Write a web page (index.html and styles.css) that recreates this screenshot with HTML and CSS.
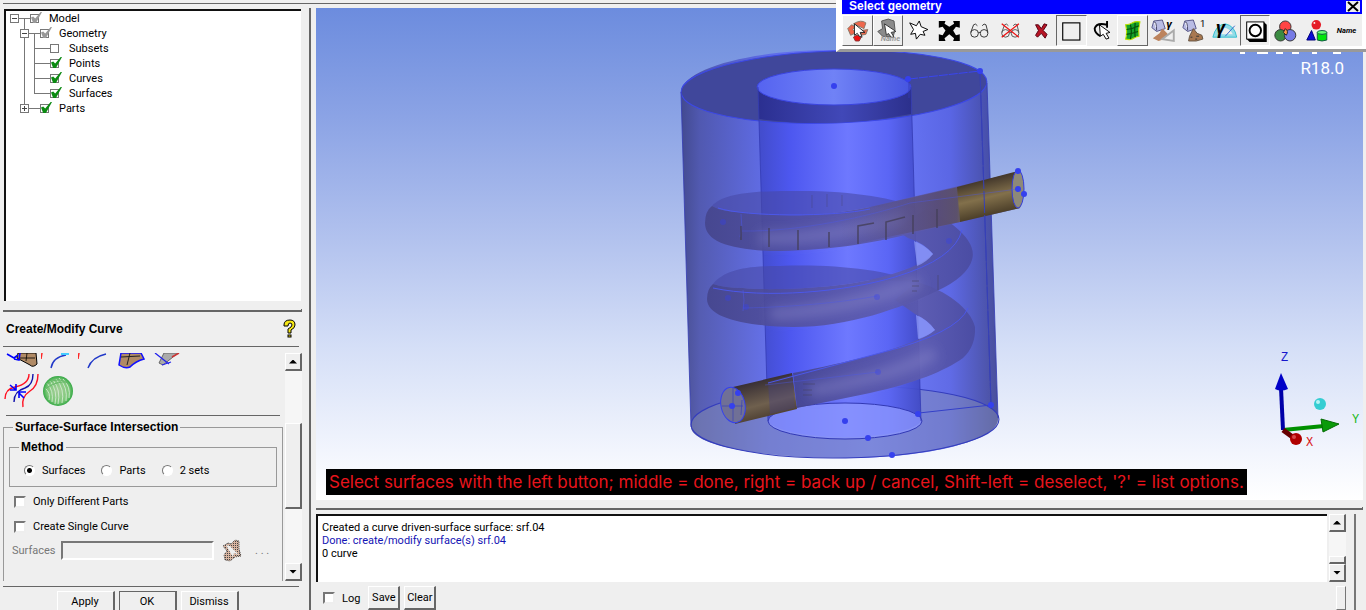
FILE: index.html
```html
<!DOCTYPE html>
<html lang="en">
<head>
    <meta charset="UTF-8">
    <meta name="viewport" content="width=device-width, initial-scale=1.0">
    <title>Create/Modify Curve</title>
    <link rel="stylesheet" href="styles.css">
</head>
<body>
    <div class="app">
        <aside class="sidebar">
            <nav class="tree">
                <ul class="root">
                    <li>
                        <div class="node"><button class="expander minus" aria-label="Collapse Model"></button><span class="branch"></span><label><input type="checkbox" class="tick partial" checked>Model</label></div>
                        <ul>
                            <li>
                                <div class="node"><button class="expander minus" aria-label="Collapse Geometry"></button><span class="branch"></span><label><input type="checkbox" class="tick partial" checked>Geometry</label></div>
                                <ul>
                                    <li class="node leaf"><span class="branch"></span><label><input type="checkbox" class="tick">Subsets</label></li>
                                    <li class="node leaf"><span class="branch"></span><label><input type="checkbox" class="tick" checked>Points</label></li>
                                    <li class="node leaf"><span class="branch"></span><label><input type="checkbox" class="tick" checked>Curves</label></li>
                                    <li class="node leaf"><span class="branch"></span><label><input type="checkbox" class="tick" checked>Surfaces</label></li>
                                </ul>
                            </li>
                            <li>
                                <div class="node"><button class="expander plus" aria-label="Expand Parts"></button><span class="branch"></span><label><input type="checkbox" class="tick" checked>Parts</label></div>
                            </li>
                        </ul>
                    </li>
                </ul>
            </nav>
            <div class="splitter"></div>
            <header class="panel-title">
                <h2>Create/Modify Curve</h2>
                <button class="help" aria-label="Help">
                    <svg width="14" height="20" viewBox="0 0 14 20"><path d="M1 6 Q1 1 7 1 Q12 1 12 6 Q12 9 8 11 V14 H5 V10 Q9 8 9 6 Q9 4 7 4 Q5 4 5 7 H1Z" fill="#f5e614" stroke="#000"/><rect x="5" y="16" width="3" height="2" fill="#f5e614" stroke="#000"/></svg>
                </button>
            </header>
            <div class="rule"></div>
            <div class="scroll-area">
                <div class="scroll-content">
                    <div class="icon-row clipped">
                        <button aria-label="Curve from surface"><svg width="36" height="16" viewBox="0 0 36 16"><path d="M14 0 H32 L33 11 Q29 15 26 12 L13 5Z" fill="#b08a65" stroke="#000"/><path d="M23 0 L22 8 M16 5 L31 5" stroke="#000" stroke-width=".8"/><path d="M3 1 L10 5 L14 2 M10 6 L15 7 L16 0" fill="none" stroke="#00f" stroke-width="1.6"/></svg></button>
                        <button aria-label="Extract curve"><svg width="36" height="16" viewBox="0 0 36 16"><path d="M1 0 L0 6" stroke="#f22" stroke-width="1.5"/><path d="M10 15 Q12 4 25 2" fill="none" stroke="#2038c8" stroke-width="1.4"/><path d="M20 1 H28" stroke="#4cf" stroke-width="2"/></svg></button>
                        <button aria-label="Project curve"><svg width="36" height="16" viewBox="0 0 36 16"><path d="M1 0 L0 6" stroke="#f22" stroke-width="1.5"/><path d="M10 15 Q14 4 28 1" fill="none" stroke="#2038c8" stroke-width="1.4"/></svg></button>
                        <button aria-label="Surface boundary"><svg width="36" height="16" viewBox="0 0 36 16"><path d="M6 0 H26 L29 6 Q21 8 15 14 Q10 16 4 12Z" fill="#b08a65" stroke="#1010ff" stroke-width="1.5"/><path d="M15 0 L12 12 M6 4 L25 3" fill="none" stroke="#222"/></svg></button>
                        <button aria-label="Trim curve"><svg width="36" height="16" viewBox="0 0 36 16"><path d="M12 0 H26 L11 12 L7 10Z" fill="#aaa" stroke="#666"/><path d="M3 0 L17 11 M10 12 L19 9" stroke="#2222ee" stroke-width="1.3"/><path d="M20 4 L27 0" stroke="#c33" stroke-width="1.5"/></svg></button>
                    </div>
                    <div class="icon-row">
                        <button aria-label="Concatenate curves"><svg width="36" height="36" viewBox="0 0 36 36"><g fill="none" stroke-width="1.4"><path d="M1 26 Q1 16 11 14 Q25 11 25 1" stroke="#f12"/><path d="M10 29 Q10 18 21 15 Q29 12 29 1" stroke="#11a"/><path d="M19 34 Q17 24 26 18 Q34 13 34 1" stroke="#f12"/></g><path d="M6 12 L12 17 M6 17 L12 17 L12 11 M20 25 L15 20 M15 25 V19 H22" stroke="#00f" stroke-width="1.6" fill="none"/></svg></button>
                        <button aria-label="Surface curves"><svg width="36" height="36" viewBox="0 0 36 36"><defs><radialGradient id="ball"><stop offset="0" stop-color="#a6cf9a"/><stop offset=".75" stop-color="#7cc878"/><stop offset="1" stop-color="#35a845"/></radialGradient></defs><circle cx="17" cy="18" r="15" fill="url(#ball)"/><g fill="none" stroke="#d2ead0" stroke-width=".9"><path d="M6 10 Q13 18 11 29"/><path d="M9 8 Q17 18 14 31"/><path d="M12 7 Q20 17 17 31"/><path d="M15 6 Q24 16 21 30"/><path d="M18 5 Q27 14 25 28"/><path d="M22 6 Q30 14 28 25"/><path d="M4 15 Q10 20 8 27"/></g><path d="M6 11 Q18 2 29 12 M4 16 Q15 8 26 9" fill="none" stroke="#66b868"/></svg></button>
                    </div>
                    <div class="rule"></div>
                    <fieldset class="group">
                        <legend>Surface-Surface Intersection</legend>
                        <fieldset class="method">
                            <legend>Method</legend>
                            <label><input type="radio" name="method" checked>Surfaces</label>
                            <label><input type="radio" name="method">Parts</label>
                            <label><input type="radio" name="method">2 sets</label>
                        </fieldset>
                        <label class="option"><input type="checkbox" class="box">Only Different Parts</label>
                        <label class="option"><input type="checkbox" class="box">Create Single Curve</label>
                        <div class="surfaces">
                            <label for="surfaces">Surfaces</label>
                            <input type="text" id="surfaces" disabled>
                            <button aria-label="Select surfaces" disabled>
                                <svg width="22" height="24" viewBox="0 0 22 24"><defs><pattern id="stipple" width="2" height="2" patternUnits="userSpaceOnUse"><rect width="2" height="2" fill="#d8b4a0"/><rect width="1" height="1" fill="#444"/></pattern></defs><path d="M2 7 L7 4 L10 5 L14 1 L18 2 L18 10 L20 17 L14 18 L9 22 L4 21 L3 16 L6 12Z" fill="url(#stipple)" stroke="#444" stroke-dasharray="1 1"/><path d="M5 6 L9 7 L15 13 L18 16 L13 14 L12 18 L9 13Z" fill="#efefef"/></svg>
                            </button>
                            <span class="dots">. . .</span>
                        </div>
                    </fieldset>
                </div>
                <div class="scrollbar">
                    <button class="up" aria-label="Scroll up"></button>
                    <div class="track"><div class="thumb"></div></div>
                    <button class="down" aria-label="Scroll down"></button>
                </div>
            </div>
            <div class="rule"></div>
            <footer class="actions">
                <button>Apply</button>
                <button class="default">OK</button>
                <button>Dismiss</button>
            </footer>
        </aside>

        <main class="main">
            <section class="stage">
                <svg class="scene" viewBox="316 8 1047 492" preserveAspectRatio="none">
                    <defs>
                        <linearGradient id="outer"><stop offset="0" stop-color="#3c4288"/><stop offset=".06" stop-color="#4b52ac"/><stop offset=".28" stop-color="#5c68ea"/><stop offset=".6" stop-color="#6b79ff"/><stop offset=".85" stop-color="#5560e4"/><stop offset="1" stop-color="#3c4294"/></linearGradient>
                        <linearGradient id="inner"><stop offset="0" stop-color="#3f49c8"/><stop offset=".2" stop-color="#4b55f0"/><stop offset=".55" stop-color="#6e78ff"/><stop offset=".8" stop-color="#5964f5"/><stop offset="1" stop-color="#3f48c4"/></linearGradient>
                        <linearGradient id="mouth"><stop offset="0" stop-color="#5563f0"/><stop offset=".5" stop-color="#7082f6"/><stop offset="1" stop-color="#4655e0"/></linearGradient>
                        <linearGradient id="lip"><stop offset="0" stop-color="#2b2f90"/><stop offset=".55" stop-color="#4148b8"/><stop offset="1" stop-color="#2c308c"/></linearGradient>
                        <linearGradient id="tube"><stop offset="0" stop-color="#45458c"/><stop offset=".3" stop-color="#504e9c"/><stop offset=".7" stop-color="#5c5aac"/><stop offset="1" stop-color="#4a4ba0"/></linearGradient>
                        <linearGradient id="brownIn" gradientUnits="userSpaceOnUse" x1="840" y1="0" x2="990" y2="0"><stop offset="0" stop-color="#5d5480" stop-opacity="0"/><stop offset=".65" stop-color="#584a6c"/><stop offset=".78" stop-color="#5d4f5c"/><stop offset=".8" stop-color="#6c5d49"/></linearGradient>
                        <linearGradient id="brown" gradientUnits="userSpaceOnUse" x1="985" y1="180" x2="993" y2="214"><stop offset="0" stop-color="#45392c"/><stop offset=".5" stop-color="#82704b"/><stop offset="1" stop-color="#4d402a"/></linearGradient>
                        <linearGradient id="brownLow" gradientUnits="userSpaceOnUse" x1="762" y1="380" x2="772" y2="418"><stop offset="0" stop-color="#393035"/><stop offset=".6" stop-color="#6f604e"/><stop offset="1" stop-color="#4b3d30"/></linearGradient>
                        <filter id="soft" filterUnits="userSpaceOnUse" x="690" y="170" width="300" height="260"><feGaussianBlur stdDeviation="6"/></filter>
                    </defs>
                    <!-- outer wall -->
                    <path d="M681 92 C683 68 752 50 834 50 C918 50 986 64 987 83 L998 418 C1000 440 930 458 845 458 C760 458 691 445 691 427Z" fill="url(#outer)" opacity=".92"/>
                    <ellipse cx="845" cy="422" rx="154" ry="36" transform="rotate(-1 845 422)" fill="#858db2" fill-opacity=".45" stroke="#343dbd"/>
                    <!-- inner wall -->
                    <path d="M758 87 L768 421 A77 18 0 0 0 921 421 L911 87 A77 18 0 0 0 758 87Z" fill="url(#inner)" opacity=".92"/>
                    <ellipse cx="845" cy="421" rx="77" ry="18" fill="#8d98ff" fill-opacity=".75" stroke="#3138b4"/>
                    <!-- top face -->
                    <ellipse cx="834" cy="87" rx="153" ry="36" transform="rotate(-2 834 87)" fill="#40479b" stroke="#3c48e6"/>
                    <path d="M758 87 L759 119 Q834 129 911 114 V87Z" fill="url(#lip)"/>
                    <ellipse cx="834" cy="87" rx="77" ry="18" fill="url(#mouth)" stroke="#3a44e0"/>
                    <path d="M909 79 L980 71" stroke="#3945f0" stroke-dasharray="9 1"/>
                    <path d="M909 79 V98 M980 71 L991 405 M987 83 L998 418 M681 92 L691 427 M758 87 L768 421 M911 87 L921 421" stroke="#343bb4" stroke-width=".8" fill="none"/>
                    <!-- coil, far side -->
                    <g fill="#484aa6" fill-opacity=".6">
                        <path d="M712 206 C722 195 745 191 790 191 C850 190 895 198 917 208 L870 207 C835 214 790 219 742 212 Q722 212 712 206Z"/>
                        <path d="M713 284 C725 270 745 266 780 266 C835 264 885 270 917 282 L870 280 C835 288 770 291 743 288 Q725 288 713 284Z"/>
                    </g>
                    <!-- coil, near side -->
                    <g fill="url(#tube)" fill-opacity=".9">
                        <path d="M915 314 Q928 320 935 330 Q928 336 917 340 C895 350 850 362 793 373 L797 408 L870 393 C915 383 945 371 963 358 Q976 346 975 327 C971 309 946 290 917 282 L895 300 Z"/>
                        <path d="M743 288 C770 291 835 288 870 280 Q920 268 933 254 Q924 243 908 238 L895 230 L926 209 Q943 217 953 225 Q977 244 972 260 Q967 277 937 291 C900 308 850 327 793 327 C745 326 707 318 707 299 Q707 289 713 284 Q725 288 743 288Z"/>
                        <path d="M712 206 Q722 212 742 212 C790 219 835 214 870 207 L1018 172 L1020 208 L913 233 C870 244 825 251 770 251 C730 249 705 242 705 223 Q705 211 712 206Z"/>
                    </g>
                    <!-- light openings between the turns -->
                    <g fill="#8a95f4" fill-opacity=".8">
                        <path d="M914 241 Q926 246 933 254 Q927 262 917 266Z"/>
                        <path d="M916 315 Q928 320 935 330 Q928 336 918 339Z"/>
                    </g>
                    <g filter="url(#soft)" fill="none" stroke="#8f8ccc" stroke-opacity=".45" stroke-width="12">
                        <path d="M760 238 C810 240 860 230 905 218"/>
                        <path d="M770 314 C820 313 870 300 920 282"/>
                        <path d="M810 391 C870 380 905 369 935 353"/>
                    </g>
                    <path d="M840 214 L958 187 L960 222 L840 247Z" fill="url(#brownIn)" opacity=".8"/>
                    <path d="M957 187 L1018 171 Q1027 187 1020 208 L960 222Z" fill="url(#brown)"/>
                    <path d="M733 387 L792 373 L797 409 L735 424Z" fill="url(#brownLow)"/>
                    <path d="M768 382 L792 375 L795 408 L770 414Z" fill="#474083" opacity=".4"/>
                    <ellipse cx="1018" cy="189" rx="6" ry="19" fill="#8e8978" stroke="#343ddd"/>
                    <ellipse cx="733" cy="405" rx="12" ry="18" fill="#707096" stroke="#3440ee" transform="rotate(-12 733 405)"/>
                    <path d="M722 406 H743 M733 388 V421 M742 400 L741 415" stroke="#3840b8" stroke-width=".7"/>
                    <g fill="none" stroke="#4c58ea" stroke-width="1">
                        <path d="M718 208 C745 217 835 217 870 209"/>
                        <path d="M713 288 C765 299 845 292 895 277 Q955 259 962 230"/>
                        <path d="M768 383 L880 353 Q958 333 968 308"/>
                        <path d="M741 214 Q743 226 740 237 M743 290 Q745 300 743 311" stroke-opacity=".5"/>
                        <path d="M742 231 C800 232 870 216 910 203 L1018 189" stroke-opacity=".4"/>
                        <path d="M743 308 C800 307 850 301 877 296 M765 385 L878 372" stroke-opacity=".4"/>
                    </g>
                    <g fill="none" stroke="#443f58" stroke-width="1.6" stroke-opacity=".8">
                        <path d="M741 226 V240 M769 228 V247 M798 230 V250 M829 232 V247 M858 244 V226 L874 223 M886 240 V222 L905 217 M913 234 V215 M937 228 V209"/>
                        <path d="M812 195 V208 M827 194 V207 M842 195 V206" stroke-opacity=".2"/>
                        <path d="M912 281 H919 M912 286 H919 M912 291 H917 M938 275 V290 M803 384 H815 M803 390 H812 M803 395 H812" stroke-width="1" stroke-opacity=".5"/>
                    </g>
                    <path d="M919 413 L991 405" stroke="#3440c8"/>
                    <path d="M980 71 L991 405" stroke="#3640b8" stroke-dasharray="22 2"/>
                    <g fill="#3540ee">
                        <circle cx="834" cy="86" r="3"/><circle cx="908" cy="79" r="3"/><circle cx="980" cy="71" r="3"/><circle cx="1018" cy="171" r="3"/><circle cx="1018" cy="189" r="3"/><circle cx="1024" cy="194" r="3"/><circle cx="738" cy="393" r="3"/><circle cx="732" cy="406" r="3"/><circle cx="845" cy="421" r="3"/><circle cx="868" cy="438" r="3"/><circle cx="892" cy="455" r="3"/><circle cx="991" cy="405" r="3"/><circle cx="918" cy="414" r="3"/>
                        <g opacity=".35"><circle cx="723" cy="222" r="3"/><circle cx="728" cy="298" r="3"/><circle cx="746" cy="307" r="3"/><circle cx="877" cy="297" r="3"/><circle cx="878" cy="372" r="3"/><circle cx="949" cy="241" r="3"/></g>
                    </g>
                    <!-- lower edge of the logo, showing under the toolbar -->
                    <path d="M1240 53 H1245 M1257 53 H1268 M1276 53 H1283 M1292 53 H1299 M1312 53 H1317 M1333 53 H1341" stroke="#fff" stroke-width="2"/>
                    <!-- axis triad -->
                    <path d="M1283 430 L1324 426" stroke="#009000" stroke-width="4"/>
                    <path d="M1321 419 L1339 424 L1323 432Z" fill="#0a9b0a" stroke="#056b05"/>
                    <path d="M1283 430 L1281 388" stroke="#0000a8" stroke-width="4"/>
                    <path d="M1281 373 L1288 389 Q1281 392 1275 389Z" fill="#0000c8"/>
                    <path d="M1283 430 L1294 438" stroke="#600" stroke-width="5"/>
                    <circle cx="1296" cy="439" r="6" fill="#b00000"/><circle cx="1294" cy="437" r="2" fill="#d84848"/>
                    <circle cx="1320" cy="404" r="6" fill="#35cdd2"/><circle cx="1318" cy="402" r="2" fill="#b6f4f4"/>
                    <g class="axis-text"><text x="1281" y="361" fill="#1616cc">Z</text><text x="1352" y="423" fill="#18b818">Y</text><text x="1306" y="446" fill="#d81818">X</text></g>
                </svg>
                <div class="version">R18.0</div>
                <p class="prompt">Select surfaces with the left button; middle = done, right = back up / cancel, Shift-left = deselect, '?' = list options.</p>
            </section>
            <div class="splitter"></div>
            <section class="console">
                <div class="output">
                    <div class="messages">
                        <p>Created a curve driven-surface surface: srf.04</p>
                        <p class="done">Done: create/modify surface(s) srf.04</p>
                        <p>0 curve</p>
                    </div>
                    <div class="scrollbar">
                        <button class="up" aria-label="Scroll up"></button>
                        <div class="track"><div class="thumb"></div></div>
                        <button class="down" aria-label="Scroll down"></button>
                    </div>
                </div>
                <div class="log-bar">
                    <label><input type="checkbox" class="box">Log</label>
                    <button>Save</button>
                    <button>Clear</button>
                    <span class="grip"></span>
                </div>
            </section>
        </main>
    </div>

    <section class="dialog">
        <header><h1>Select geometry</h1><button aria-label="Close"><svg width="12" height="11" viewBox="0 0 12 11"><path d="M1 1 L11 10 M11 1 L1 10" stroke="#000" stroke-width="2"/></svg></button></header>
        <div class="toolbar">
            <button class="raised" aria-label="Select all"><svg viewBox="0 0 30 30"><path d="M5 13 L9 9 L13 11 L10 14 L14 17 L8 20Z M11 8 Q19 3 24 7 L22 13 Z M19 15 L26 14 L24 19 L19 20Z" fill="#ee674c" stroke="#876" /><path d="M11 22 Q15 18 19 22 L17 26 H13Z" fill="#e11" stroke="#833"/><path d="M12 8 L23 17 L18 17 L20 22 L17 21 L15 18 L12 20Z" fill="#fff" stroke="#222"/></svg></button>
            <button class="raised" aria-label="Select by name"><svg viewBox="0 0 30 30"><path d="M8 5 L15 3 L21 5 L22 14 L20 22 L9 21 L4 16 L9 13Z" fill="#8b8b8b" stroke="#555"/><path d="M11 8 L23 16 L18 17 L21 22 L18 22 L15 18 L13 20Z" fill="#fff" stroke="#333"/><text x="7" y="26" class="icon-name" fill="#999">Name</text></svg></button>
            <button aria-label="Polygon"><svg viewBox="0 0 30 30"><path d="M6 7 L13 10 L16 5 L18 11 L25 14 L20 16 L22 20 L17 19 L13 24 L12 18 L7 19 L10 14Z" fill="#fff" stroke="#000"/></svg></button>
            <button aria-label="Entire model"><svg viewBox="0 0 30 30"><path d="M4 5 H11 L10 8 L15 11 L20 8 L19 5 H26 V12 L22 11 L19 15 L22 20 L26 19 V26 H19 L20 23 L15 19 L10 23 L11 26 H4 V19 L8 20 L11 15 L8 11 L4 12Z"/></svg></button>
            <button aria-label="Visible"><svg viewBox="0 0 30 30"><g fill="none" stroke="#333"><circle cx="10" cy="18" r="4"/><circle cx="20" cy="18" r="4"/><path d="M14 17 H16 M6 17 L9 9 Q11 7 13 10 M24 17 L22 9 Q20 7 18 10"/></g></svg></button>
            <button aria-label="Visible off"><svg viewBox="0 0 30 30"><g fill="none" stroke="#555"><circle cx="10" cy="18" r="4"/><circle cx="20" cy="18" r="4"/><path d="M14 17 H16 M6 17 L9 9 Q11 7 13 10 M24 17 L22 9 Q20 7 18 10"/></g><path d="M6 8 L24 22 M24 8 L6 22" stroke="#e11" stroke-width="1.4"/></svg></button>
            <button aria-label="Cancel"><svg viewBox="0 0 30 30"><path d="M9 9 H12 L15 13 L18 8 L21 9 L17 15 L21 19 L19 23 L15 18 L11 22 L9 20 L12 15Z" fill="#b81424" stroke="#501"/></svg></button>
            <button class="sunken" aria-label="Box select"><svg viewBox="0 0 30 30"><rect x="6" y="7" width="18" height="18" fill="none" stroke="#000" stroke-width="1.2"/></svg></button>
            <button aria-label="Flood fill"><svg viewBox="0 0 30 30"><path d="M20 5 V12 M20 9 Q9 6 7 13 Q7 18 13 21" fill="none" stroke="#000" stroke-width="2"/><path d="M12 9 L23 17 L19 18 L22 23 L19 24 L16 19 L13 21Z" fill="#fff" stroke="#000"/></svg></button>
            <button class="raised" aria-label="Surface faces"><svg viewBox="0 0 30 30"><path d="M8 9 Q12 9 15 7 Q19 5 23 6 Q21 13 22 21 Q19 21 15 24 Q12 25 8 24 Q10 17 8 9Z" fill="#16a32b" stroke="#b9e000" stroke-width="1.2"/><path d="M9 14 Q16 13 22 10 M9 19 Q15 18 21 16 M13 9 Q15 15 13 24 M18 7 Q17 15 18 22" fill="none" stroke="#064d0a" stroke-width="1.2"/></svg></button>
            <button aria-label="Angle brush"><svg viewBox="0 0 30 30"><path d="M5 5 L14 4 L17 13 L8 16 L3 12Z" fill="#b9bce4" stroke="#558"/><path d="M5 6 Q8 5 8 15" fill="#fff" stroke="#446"/><path d="M14 13 L19 18 L22 22 L10 26 L4 23 L11 18Z" fill="#bc835d"/><path d="M14 24 L26 15 V26Z" fill="#eee" stroke="#aaa" stroke-width="2"/><text x="18" y="12" class="icon-symbol">γ</text></svg></button>
            <button aria-label="Brush"><svg viewBox="0 0 30 30"><path d="M5 5 L14 4 L17 13 L8 16 L3 12Z" fill="#b9bce4" stroke="#558"/><path d="M5 6 Q8 5 8 15" fill="#fff" stroke="#446"/><path d="M14 13 L18 18 L23 20 L24 24 L17 26 L9 26 L10 21Z" fill="#a87850" stroke="#654"/><path d="M11 22 H13 M17 21 H20 M16 24 H18" stroke="#333"/><text x="21" y="11" class="icon-symbol small">1</text></svg></button>
            <button aria-label="Feature angle"><svg viewBox="0 0 30 30"><path d="M3 22 Q6 9 16 8 Q26 10 28 22Z" fill="#91dbe6" stroke="#32bfd0"/><path d="M8 19 H24 Q20 12 15 12 Q10 13 8 19Z" fill="#efefef"/><path d="M16 21 L26 10" stroke="#36c"/><text x="6" y="19" class="icon-symbol large">γ</text></svg></button>
            <button class="sunken" aria-label="Circle select"><svg viewBox="0 0 30 30"><path d="M6 6 H24 L27 9 V27 H9 L6 24Z"/><rect x="6" y="6" width="18" height="18" fill="#fff" stroke="#000"/><circle cx="15" cy="15" r="6" fill="none" stroke="#000" stroke-width="2"/></svg></button>
            <button aria-label="Colors"><svg viewBox="0 0 30 30"><g stroke="#333"><circle cx="15" cy="11" r="6" fill="#f44"/><circle cx="10" cy="20" r="6" fill="#3b8b42"/><circle cx="20" cy="20" r="6" fill="#777be5"/></g><path d="M15 13 Q19 16 16 20 L13 17Z" fill="#f94" stroke="#222"/></svg></button>
            <button aria-label="Types"><svg viewBox="0 0 30 30"><circle cx="15" cy="9" r="5" fill="#e51d28"/><circle cx="13" cy="7" r="1" fill="#fff"/><path d="M10 15 L14 25 H5Z" fill="#0b0bd6" stroke="#007"/><path d="M16 17 V25 Q21 27 26 25 V17Z" fill="#00e60c" stroke="#154"/><ellipse cx="21" cy="17" rx="5" ry="2" fill="#6f7" stroke="#154"/></svg></button>
            <button aria-label="Name"><svg viewBox="0 0 30 30"><text x="4" y="18" class="icon-name">Name</text></svg></button>
        </div>
    </section>
</body>
</html>
```
FILE: styles.css
```css
* {
    box-sizing: border-box;
}
body {
    height: 100vh;
    margin: 0;
    overflow: hidden;
    background: #efefef;
    color: #000;
    font-family: Roboto, "Liberation Sans", Arial, sans-serif;
    font-size: 11px;
}
button, input {
    font: inherit;
    color: inherit;
}
button {
    padding: 0;
    border: none;
    background: none;
}
svg {
    display: block;
}
h1, h2, p, ul {
    margin: 0;
    padding: 0;
}
ul {
    list-style: none;
}
.app {
    display: flex;
    height: 100vh;
    padding-top: 8px;
    background: linear-gradient(#666, #666) 3px 3px / 100% 1px no-repeat;
}

/* left panel */
.sidebar {
    display: flex;
    flex-direction: column;
    width: 311px;
    padding: 1px 7px 0 3px;
    border-right: 2px solid #666;
}
.tree {
    flex: 1;
    margin: 0 1px;
    border-top: 2px solid #111;
    border-left: 2px solid #111;
    background: #fff;
}
.tree ul {
    position: relative;
    margin-left: 10px;
}
.tree .root {
    margin-left: 4px;
}
.tree ul ul::before {
    content: "";
    position: absolute;
    left: 4px;
    top: -7px;
    bottom: 7px;
    border-left: 1px solid #777;
}
.node {
    display: flex;
    align-items: center;
    height: 15px;
}
.node label {
    display: flex;
    align-items: center;
    gap: 10px;
}
.branch {
    width: 11px;
    border-top: 1px solid #777;
}
.leaf .branch {
    width: 16px;
    margin-left: 4px;
}
.expander {
    position: relative;
    width: 9px;
    height: 9px;
    border: 1px solid #777;
    background: linear-gradient(#444, #444) center / 5px 1px no-repeat #fff;
}
.expander.plus {
    background: linear-gradient(#444, #444) center / 5px 1px no-repeat, linear-gradient(#444, #444) center / 1px 5px no-repeat #fff;
}
.tick {
    appearance: none;
    position: relative;
    width: 9px;
    height: 9px;
    margin: 0;
    border: 1px solid #777;
    background: #fff;
}
.tick:checked::after {
    content: "";
    position: absolute;
    left: 0;
    top: -3px;
    width: 11px;
    height: 11px;
    background: #0b8a12;
    clip-path: polygon(0 50%, 20% 40%, 38% 58%, 88% 0, 100% 0, 45% 100%, 20% 100%);
}
.tick.partial::after {
    background: #999;
}
.splitter {
    height: 3px;
    margin-top: 8px;
    border: solid #666;
    border-width: 0 1px 2px 0;
}
.panel-title {
    display: flex;
    align-items: center;
    justify-content: space-between;
    height: 34px;
    padding: 0 5px 0 3px;
}
.panel-title h2 {
    font-size: 12px;
}
.panel-title h2, legend, .dialog h1 {
    font-family: "Liberation Sans", Arial, sans-serif;
}
.rule {
    height: 1px;
    margin-right: 3px;
    background: #666;
}
.scroll-area {
    display: flex;
    justify-content: space-between;
    height: 228px;
    margin: 6px 0 5px;
    overflow: hidden;
}
.scroll-content {
    width: 280px;
}
.scroll-content > .rule {
    margin: 2px 3px 4px;
}
.icon-row {
    display: flex;
    align-items: center;
    height: 44px;
    padding-left: 1px;
}
.icon-row.clipped {
    height: 16px;
}
.icon-row button {
    width: 37px;
}
fieldset {
    margin: 0;
    border: 1px solid #999;
}
legend {
    padding: 0 2px;
    font-size: 12px;
    font-weight: bold;
    line-height: 14px;
}
.group {
    padding: 6px 5px 40px;
}
.group > legend {
    margin-left: 4px;
}
.method {
    display: flex;
    gap: 16px;
    padding: 4px 14px;
    margin-bottom: 2px;
}
.method > legend {
    margin-left: -5px;
}
.method label, .option, .log-bar label {
    display: flex;
    align-items: center;
    gap: 7px;
}
.method label {
    height: 24px;
}
.option {
    height: 25px;
    padding-left: 5px;
}
input[type="radio"] {
    appearance: none;
    width: 11px;
    height: 11px;
    margin: 0;
    border: 1px solid;
    border-color: #777 #fff #fff #777;
    border-radius: 50%;
    background: #fff;
}
input[type="radio"]:checked {
    background: radial-gradient(circle, #000 0 2px, #fff 3px);
}
.box {
    appearance: none;
    width: 12px;
    height: 12px;
    margin: 0;
    border: 2px solid;
    border-color: #777 #eee #eee #777;
    background: #fff;
}
.surfaces {
    display: flex;
    align-items: center;
    height: 23px;
    padding-left: 3px;
    color: #777;
}
.surfaces label {
    width: 49px;
}
.surfaces input {
    width: 153px;
    height: 19px;
    margin-right: 7px;
    border: 2px solid;
    border-color: #777 #fff #fff #777;
    background: #efefef;
}
.dots {
    margin-left: 12px;
}

/* scrollbars */
.scrollbar {
    display: flex;
    flex-direction: column;
    width: 17px;
}
.scrollbar button {
    height: 18px;
}
.scrollbar button, .thumb {
    border: solid;
    border-width: 1px 2px 2px 1px;
    border-color: #fff #666 #666 #fff;
    background: #efefef;
}
.scrollbar button::before {
    content: "";
    display: block;
    width: 8px;
    height: 4px;
    margin: 0 auto;
    background: #000;
}
.up::before {
    clip-path: polygon(50% 0, 100% 100%, 0 100%);
}
.down::before {
    clip-path: polygon(0 0, 100% 0, 50% 100%);
}
.track {
    display: flex;
    flex-direction: column;
    flex: 1;
    background: #f6f6f6;
}
.sidebar .thumb {
    height: 86px;
    margin-top: 52px;
}
.console .thumb {
    height: 8px;
    margin-top: auto;
}
.actions {
    display: flex;
    justify-content: center;
    gap: 4px;
    height: 19px;
    margin-top: 4px;
    padding-right: 10px;
}
.actions button {
    width: 58px;
    height: 22px;
}
.actions button, .log-bar button {
    border: solid;
    border-width: 1px 2px 2px 1px;
    border-color: #fff #666 #666 #fff;
}
.actions .default {
    border-color: #666;
}

/* graphics window and messages */
.main {
    display: flex;
    flex: 1;
    flex-direction: column;
    min-width: 0;
    padding: 0 3px 0 5px;
}
.main > .splitter {
    margin-top: 7px;
}
.stage {
    position: relative;
    flex: 1;
    min-height: 0;
    background: linear-gradient(#6c8cde, #8ba3e5 22%, #b2c2ee 47%, #d5dff7 69%, #f2f5fd 90%, #fff);
}
.scene {
    position: absolute;
    width: 100%;
    height: 100%;
}
.axis-text {
    font-family: "Liberation Mono", monospace;
    font-size: 12px;
}
.version {
    position: absolute;
    top: 50px;
    right: 19px;
    color: #fff;
    font-size: 17px;
    line-height: 20px;
}
.prompt {
    position: absolute;
    left: 10px;
    bottom: 5px;
    padding: 0 3px;
    background: #000;
    color: #e8141c;
    font-family: Inter, "Liberation Sans", sans-serif;
    font-size: 17px;
    line-height: 26px;
    white-space: nowrap;
}
.console {
    margin-right: 7px;
    margin-top: 4px;
    padding-right: 8px;
    border-right: 2px solid #777;
}
.output {
    display: flex;
    gap: 2px;
    height: 68px;
}
.messages {
    flex: 1;
    padding: 5px 4px;
    border-top: 2px solid #111;
    border-left: 2px solid #111;
    background: #fff;
    line-height: 13px;
}
.done {
    color: #1414b4;
}
.log-bar {
    display: flex;
    align-items: center;
    gap: 4px;
    height: 24px;
    margin-top: 4px;
    padding-left: 7px;
}
.log-bar label {
    margin-right: 4px;
}
.log-bar button {
    width: 32px;
    height: 24px;
}
.grip {
    width: 10px;
    height: 24px;
    margin-left: auto;
    border: 1px solid #fff;
    border-right-color: #777;
    border-bottom-color: #777;
}

/* floating selection toolbar */
.dialog {
    position: absolute;
    top: 0;
    right: 0;
    width: 530px;
    height: 52px;
    padding: 0 4px 0 2px;
    border-left: 4px solid #fff;
    border-bottom: 3px solid #999;
    background: #fff;
}
.dialog header {
    display: flex;
    align-items: center;
    justify-content: space-between;
    height: 14px;
    padding: 0 2px 2px 7px;
    background: #0000ff;
    color: #fff;
}
.dialog h1 {
    font-size: 12px;
    line-height: 12px;
}
.dialog header button {
    padding: 0 1px;
    background: #efefef;
}
.toolbar {
    display: flex;
    padding-top: 1px;
    background: #efefef;
}
.toolbar button {
    flex: 1;
    height: 31px;
    border: 1px solid transparent;
}
.toolbar .raised {
    border-color: #fff #666 #666 #fff;
}
.toolbar .sunken {
    border-color: #666 #fff #fff #666;
}
.toolbar svg {
    width: 100%;
    height: 29px;
    overflow: visible;
}
.icon-name {
    font-size: 8px;
    font-style: italic;
    font-weight: bold;
}
.icon-symbol {
    font-size: 12px;
    font-style: italic;
    font-weight: bold;
}
.icon-symbol.small {
    font-size: 10px;
    font-style: normal;
    font-weight: normal;
}
.icon-symbol.large {
    font-size: 20px;
}
```
